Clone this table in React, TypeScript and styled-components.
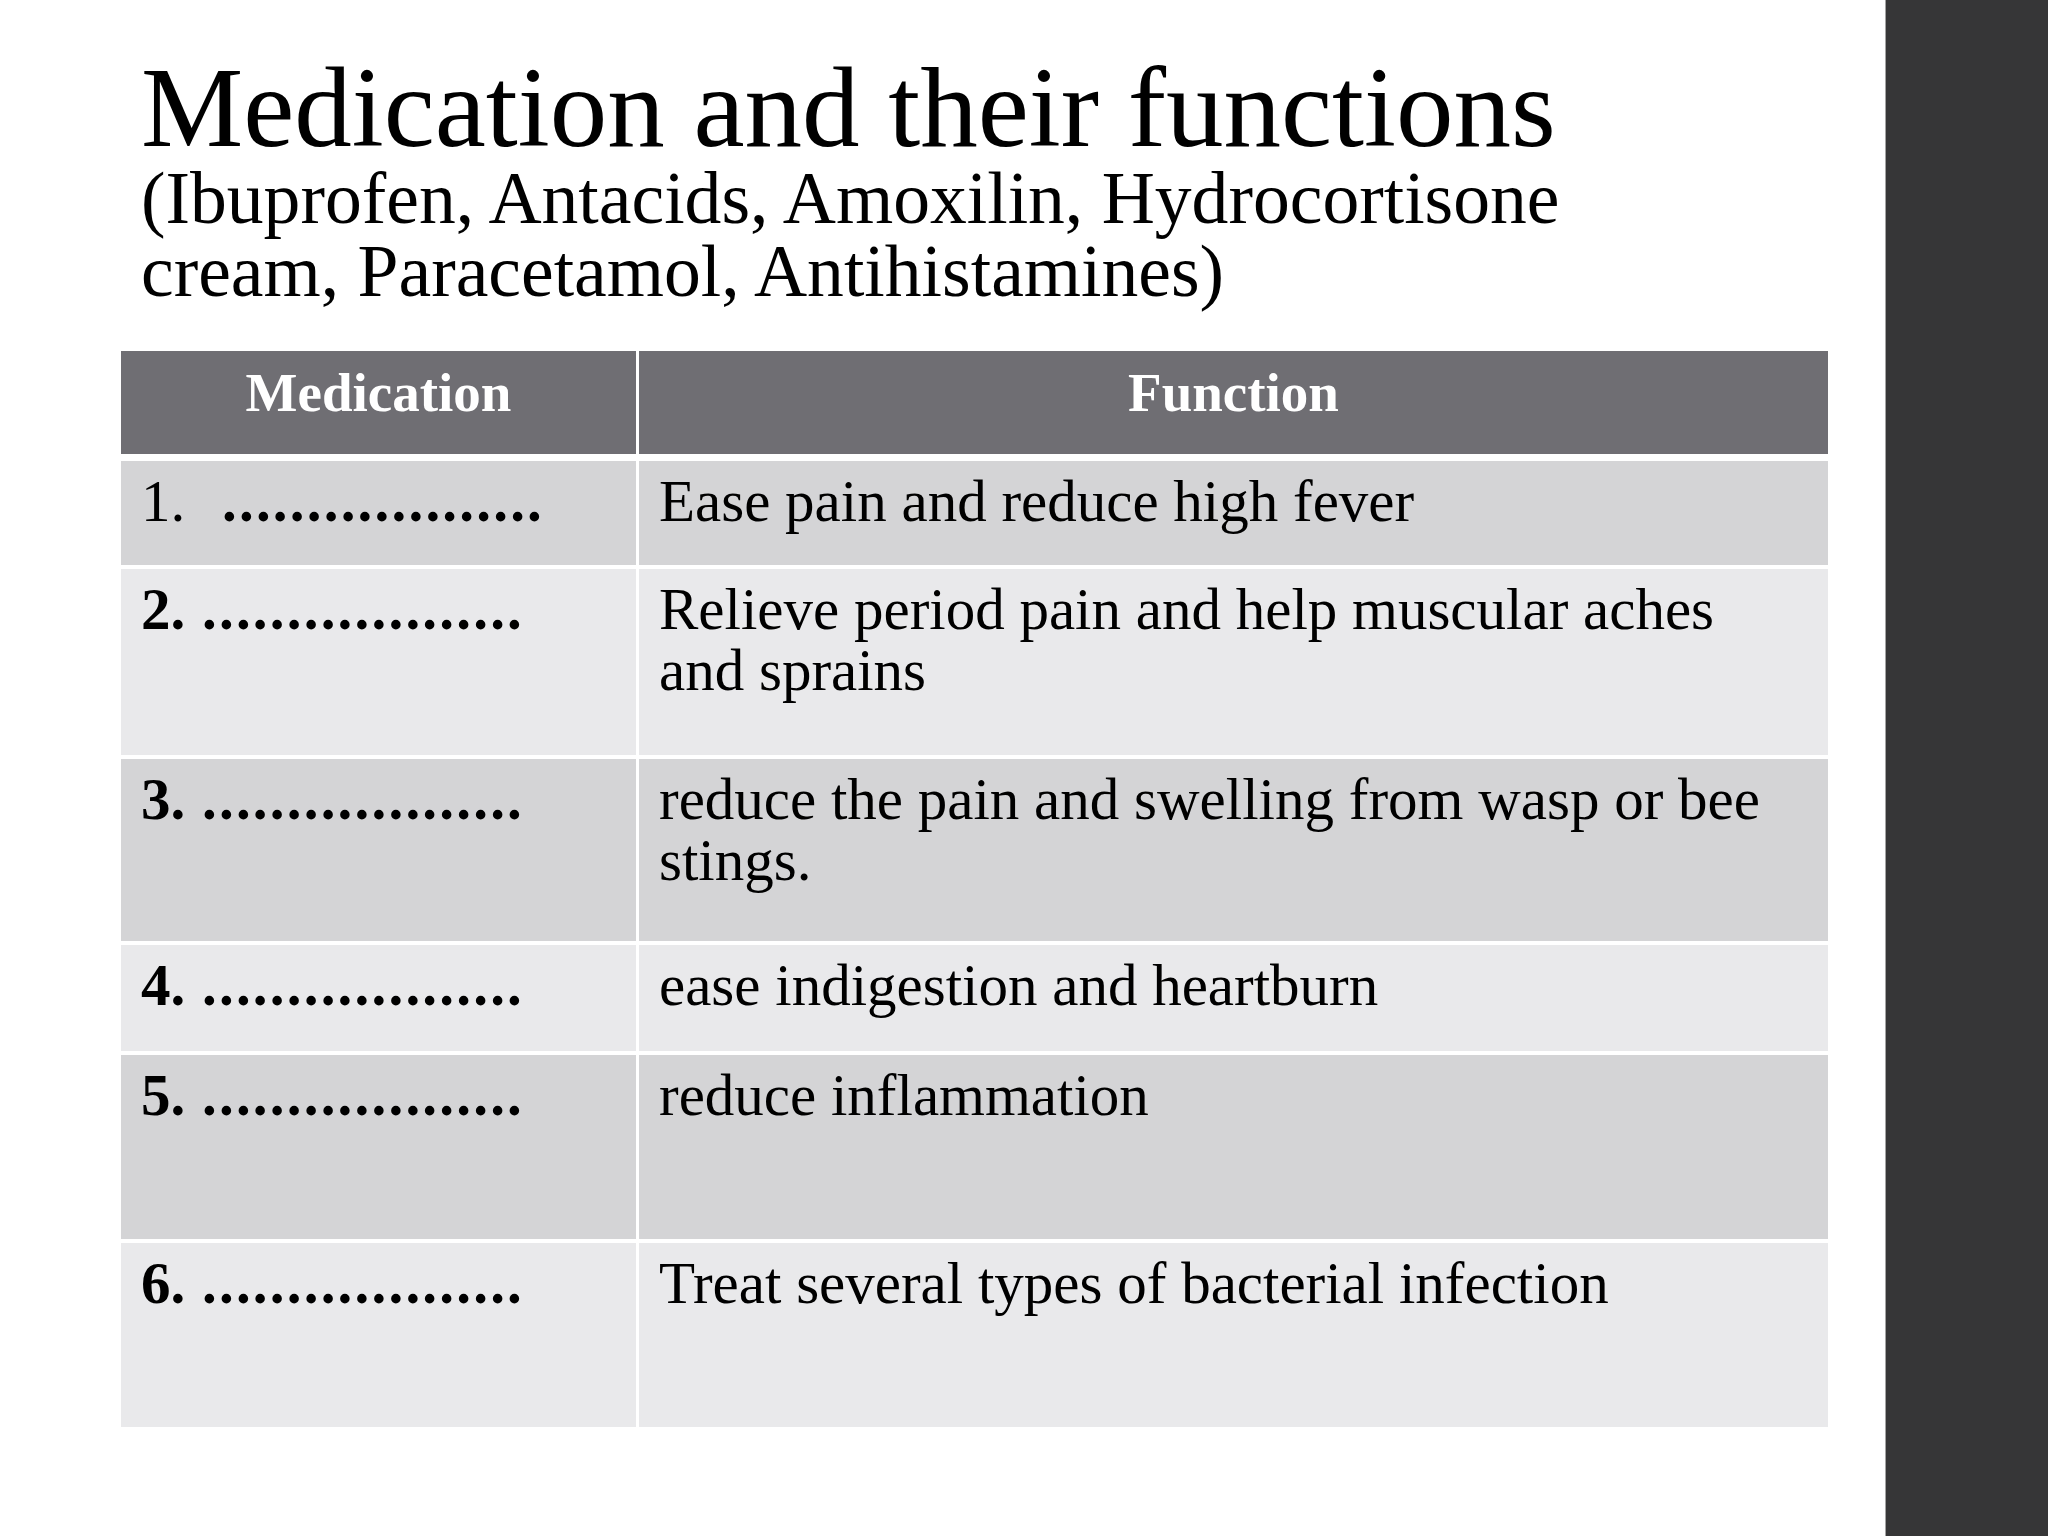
import React from "react";
import styled, { createGlobalStyle } from "styled-components";

const Global = createGlobalStyle`
  html, body { margin: 0; padding: 0; background: #ffffff; }
  body { font-family: "Liberation Serif", "Times New Roman", serif; color: #000; }
`;

const Page = styled.div`
  width: 2048px;
  height: 1536px;
  display: flex;
  overflow: hidden;
`;

const Slide = styled.main`
  width: 1885px;
  flex: none;
  padding: 54px 0 0 121px;
  box-sizing: border-box;
  background: #ffffff;
`;

const SideBar = styled.aside`
  flex: 1;
  background: #363637;
  border-left: 1px solid #a3a3a3;
`;

const Heading = styled.header`
  padding-left: 20px;
  margin-bottom: 43px;
`;

const Title = styled.h1`
  margin: 0;
  font-family: "Liberation Serif", "Times New Roman", serif;
  font-weight: 400;
  font-size: 115px;
  line-height: 108px;
  color: #000;
  white-space: nowrap;
`;

const Subtitle = styled.h2`
  margin: 0;
  font-family: "Liberation Serif", "Times New Roman", serif;
  font-weight: 400;
  font-size: 73.6px;
  line-height: 73px;
  color: #000;
  white-space: nowrap;
`;

const Table = styled.div`
  width: 1707px;
  display: grid;
  grid-template-columns: 515px 1fr;
  column-gap: 3px;
  row-gap: 4px;
`;

const HeadCell = styled.div`
  background: #6f6e73;
  height: 103px;
  margin-bottom: 3px;
  box-sizing: border-box;
  padding-top: 11px;
  text-align: center;
  color: #ffffff;
  font-weight: 700;
  font-size: 55px;
  line-height: 61px;
`;

const Cell = styled.div<{ $dark: boolean; $h: number }>`
  background: ${(p) => (p.$dark ? "#d4d4d6" : "#e9e9eb")};
  height: ${(p) => p.$h}px;
  box-sizing: border-box;
  padding: 10px 22px 0 20px;
  font-size: 59px;
  line-height: 61px;
  color: #000;
`;

const FuncCell = styled(Cell)`
  padding-left: 20px;
`;

const Num = styled.span<{ $bold: boolean }>`
  font-weight: ${(p) => (p.$bold ? 700 : 400)};
`;

const Dots = styled.span<{ $wide: boolean }>`
  font-weight: 700;
  letter-spacing: 2.2px;
  margin-left: ${(p) => (p.$wide ? "22px" : "2px")};
`;

const rows = [
  { fn: "Ease pain and reduce high fever", h: 104 },
  { fn: "Relieve period pain and help muscular aches and sprains", h: 186 },
  { fn: "reduce the pain and swelling from wasp or bee stings.", h: 182 },
  { fn: "ease indigestion and heartburn", h: 106 },
  { fn: "reduce inflammation", h: 184 },
  { fn: "Treat several types of bacterial infection", h: 184 },
];

export default function App() {
  return (
    <Page>
      <Global />
      <Slide>
        <Heading>
          <Title>Medication and their functions</Title>
          <Subtitle>
            (Ibuprofen, Antacids, Amoxilin, Hydrocortisone
            <br />
            cream, Paracetamol, Antihistamines)
          </Subtitle>
        </Heading>
        <Table>
          <HeadCell>Medication</HeadCell>
          <HeadCell>Function</HeadCell>
          {rows.map((r, i) => (
            <React.Fragment key={i}>
              <Cell $dark={i % 2 === 0} $h={r.h}>
                <Num $bold={i !== 0}>{i + 1}.</Num>{" "}
                <Dots $wide={i === 0}>{"..................."}</Dots>
              </Cell>
              <FuncCell $dark={i % 2 === 0} $h={r.h}>
                {r.fn}
              </FuncCell>
            </React.Fragment>
          ))}
        </Table>
      </Slide>
      <SideBar />
    </Page>
  );
}
